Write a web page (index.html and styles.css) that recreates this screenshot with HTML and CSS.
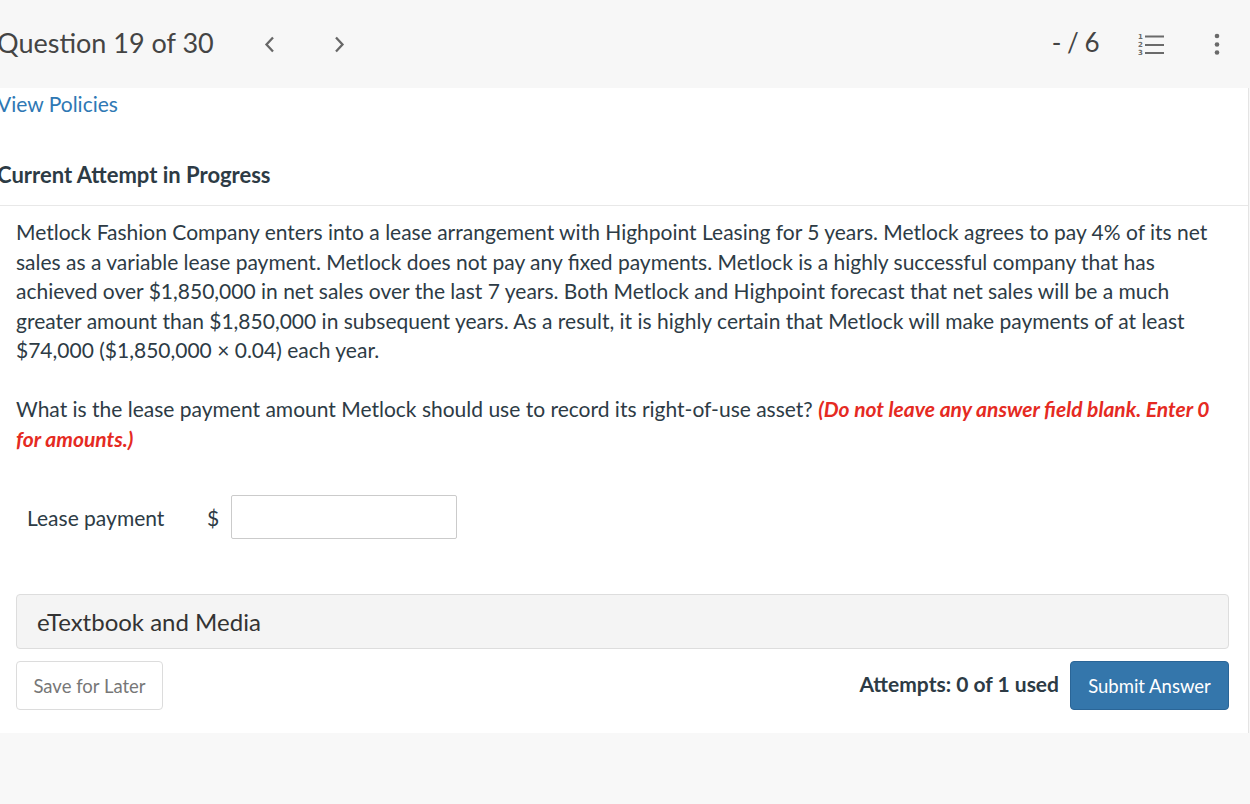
FILE: index.html
```html
<!DOCTYPE html>
<html lang="en">
  <head>
    <meta charset="utf-8" />
    <title>Question 19 of 30</title>
    <link rel="stylesheet" href="styles.css">
  </head>
  <body>
    <header class="quiz-header">
      <h1 class="q-title">Question 19 of 30</h1>
      <nav class="q-nav">
        <button class="icon-btn" type="button" aria-label="Previous">
          <svg width="11" height="17" viewBox="0 0 11 17"><path d="M9 1.5 L2.5 8.5 L9 15.5" fill="none" stroke="#676767" stroke-width="2.3"/></svg>
        </button>
        <button class="icon-btn" type="button" aria-label="Next">
          <svg width="11" height="17" viewBox="0 0 11 17"><path d="M2 1.5 L8.5 8.5 L2 15.5" fill="none" stroke="#676767" stroke-width="2.3"/></svg>
        </button>
      </nav>
      <div class="q-tools">
        <span class="score">- / 6</span>
        <button class="icon-btn list-btn" type="button" aria-label="Question list">
          <svg width="27" height="22" viewBox="0 0 27 22">
            <text x="0" y="5.5" class="tiny-num">1</text>
            <text x="0" y="14" class="tiny-num">2</text>
            <text x="0" y="22" class="tiny-num">3</text>
            <rect x="7" y="2.5" width="19" height="2" fill="#6a6a6a"/>
            <rect x="7" y="11" width="19" height="2" fill="#6a6a6a"/>
            <rect x="7" y="19" width="19" height="2" fill="#6a6a6a"/>
          </svg>
        </button>
        <button class="icon-btn kebab-btn" type="button" aria-label="More">
          <svg width="6" height="22" viewBox="0 0 6 22">
            <circle cx="3" cy="3" r="2.3" fill="#6a6a6a"/>
            <circle cx="3" cy="11.5" r="2.3" fill="#6a6a6a"/>
            <circle cx="3" cy="19.5" r="2.3" fill="#6a6a6a"/>
          </svg>
        </button>
      </div>
    </header>

    <main class="quiz-main">
      <div class="meta">
        <a class="policies" href="#">View Policies</a>
        <h2 class="attempt-title">Current Attempt in Progress</h2>
      </div>

      <section class="question">
        <p>Metlock Fashion Company enters into a lease arrangement with Highpoint Leasing for 5 years. Metlock agrees to pay 4% of its net sales as a variable lease payment. Metlock does not pay any fixed payments. Metlock is a highly successful company that has achieved over $1,850,000 in net sales over the last 7 years. Both Metlock and Highpoint forecast that net sales will be a much greater amount than $1,850,000 in subsequent years. As a result, it is highly certain that Metlock will make payments of at least $74,000 ($1,850,000 × 0.04) each year.</p>
        <p>What is the lease payment amount Metlock should use to record its right-of-use asset? <em class="warn">(Do not leave any answer field blank. Enter 0 for amounts.)</em></p>

        <div class="answer-row">
          <label class="answer-label" for="lease">Lease payment</label>
          <span class="currency">$</span>
          <input id="lease" class="answer-input" type="text" />
        </div>

        <div class="media-panel">eTextbook and Media</div>

        <div class="actions">
          <button class="btn-save" type="button">Save for Later</button>
          <span class="attempts">Attempts: 0 of 1 used</span>
          <button class="btn-submit" type="button">Submit Answer</button>
        </div>
      </section>
    </main>
  </body>
</html>
```

FILE: styles.css
```css
body {
  margin: 0;
  background-color: #f8f8f8;
  font-family: Lato, "Open Sans", sans-serif;
  color: #2d3b45;
  overflow: hidden;
}

.quiz-header {
  display: flex;
  align-items: center;
  height: 88px;
  background-color: #f7f7f7;
  padding-right: 21px;
}

.q-title {
  margin: -4px 0 0 -3px;
  font-size: 27px;
  font-weight: 400;
  color: #444444;
}

.q-nav {
  display: flex;
  margin-left: 36px;
  gap: 30px;
}

.icon-btn {
  background: none;
  border: 0;
  padding: 0;
  cursor: pointer;
  display: flex;
  align-items: center;
  justify-content: center;
}

.q-nav .icon-btn {
  width: 40px;
  height: 40px;
}

.q-tools {
  display: flex;
  align-items: center;
  margin-left: auto;
}

.score {
  margin-top: -4px;
  font-size: 26px;
  color: #444444;
  margin-right: 39px;
  letter-spacing: -0.5px;
}

.tiny-num {
  font-family: "DejaVu Sans", sans-serif;
  font-size: 7px;
  font-weight: 700;
  fill: #6a6a6a;
}

.list-btn {
  width: 27px;
  height: 30px;
  margin-right: 40px;
}

.kebab-btn {
  width: 24px;
  height: 30px;
}

.quiz-main {
  background-color: #ffffff;
  margin-right: 1px;
  border-right: 1px solid #e4e4e4;
  padding-bottom: 23px;
}

.meta {
  padding: 4px 0 18px;
  border-bottom: 1px solid #e8e8e8;
}

.policies {
  display: block;
  margin-left: -3px;
  font-size: 21px;
  line-height: 24px;
  color: #2e78b4;
  text-decoration: none;
}

.attempt-title {
  margin: 47px 0 0 -3px;
  font-size: 22px;
  line-height: 24px;
  font-weight: 700;
}

.question {
  padding: 11px 19px 0 16px;
}

.question p {
  margin: 0 0 29.5px;
  font-size: 21px;
  line-height: 29.5px;
}

.warn {
  color: #e52a22;
  font-weight: 700;
}

.answer-row {
  display: flex;
  align-items: center;
  margin: 42px 0 0 11px;
  font-size: 21px;
}

.answer-label {
  width: 180px;
}

.currency {
  margin-right: 12px;
}

.answer-input {
  width: 226px;
  height: 44px;
  box-sizing: border-box;
  border: 1px solid #cbcbcb;
  border-radius: 2px;
}

.media-panel {
  margin-top: 55px;
  height: 55px;
  box-sizing: border-box;
  display: flex;
  align-items: center;
  padding-left: 20px;
  background-color: #f4f4f4;
  border: 1px solid #dddddd;
  border-radius: 4px;
  font-size: 24px;
  color: #333333;
}

.actions {
  display: flex;
  align-items: center;
  margin-top: 12px;
}

.btn-save {
  width: 147px;
  height: 49px;
  background: #ffffff;
  border: 1px solid #dcdcdc;
  border-radius: 4px;
  font-family: inherit;
  font-size: 18.5px;
  color: #777777;
  cursor: pointer;
}

.attempts {
  margin-left: auto;
  margin-right: 11px;
  margin-top: -4px;
  font-size: 21px;
  font-weight: 700;
}

.btn-submit {
  width: 159px;
  height: 49px;
  background: #3476ab;
  border: 1px solid #2a6597;
  border-radius: 4px;
  font-family: inherit;
  font-size: 18.5px;
  color: #ffffff;
  cursor: pointer;
}
```
